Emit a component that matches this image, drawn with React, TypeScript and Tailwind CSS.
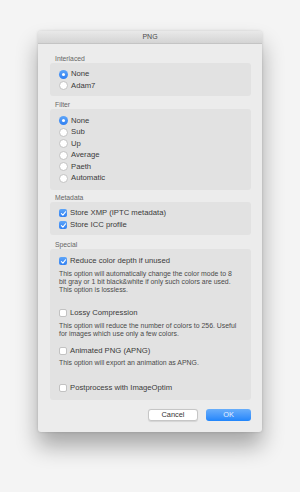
import React from 'react';

const font = { fontFamily: '"Liberation Sans", Arial, sans-serif' };

function Radio({ on, label }: { on?: boolean; label: string }) {
  return (
    <div className="flex h-[11.5px] items-center gap-[3px]">
      {on ? (
        <span className="flex h-[9px] w-[9px] items-center justify-center rounded-full bg-gradient-to-b from-[#5ea5f8] to-[#2f7ff2]">
          <span className="h-[3px] w-[3px] rounded-full bg-white" />
        </span>
      ) : (
        <span className="h-[9px] w-[9px] rounded-full border border-[#c2c2c2] bg-white" />
      )}
      <span className="text-[7.7px] leading-none text-[#3a3a3a]">{label}</span>
    </div>
  );
}

function Check({ on, label }: { on?: boolean; label: string }) {
  return (
    <div className="flex h-[12px] items-center gap-[3px]">
      {on ? (
        <span className="flex h-[8px] w-[8px] items-center justify-center rounded-[2px] bg-gradient-to-b from-[#5ea5f8] to-[#2f7ff2]">
          <svg viewBox="0 0 8 8" className="h-[7px] w-[7px]">
            <path d="M1.6 4.2 L3.3 5.9 L6.4 2" fill="none" stroke="white" strokeWidth="1.3" strokeLinecap="round" strokeLinejoin="round" />
          </svg>
        </span>
      ) : (
        <span className="h-[8px] w-[8px] rounded-[2px] border border-[#c2c2c2] bg-white" />
      )}
      <span className="text-[7.7px] leading-none text-[#3a3a3a]">{label}</span>
    </div>
  );
}

function Section({ title, children, className }: { title: string; children: React.ReactNode; className?: string }) {
  return (
    <div className={className}>
      <div className="h-[8px] pl-[5px] text-[6.8px] leading-[8px] text-[#666]">{title}</div>
      <div className="rounded-[3px] bg-[#e2e2e2] pl-[9px]">{children}</div>
    </div>
  );
}

function Desc({ children, className }: { children: React.ReactNode; className?: string }) {
  return <p className={`pr-[12px] text-[6.9px] leading-[8px] text-[#4a4a4a] ${className ?? ''}`}>{children}</p>;
}

export default function App() {
  return (
    <div className="flex h-[492px] w-[300px] justify-center bg-[#f4f4f4] pt-[31px]" style={font}>
      <div className="h-[401px] w-[224px] overflow-hidden rounded-[3px] bg-[#ececec] shadow-[0_14px_22px_rgba(0,0,0,0.32),0_0_3px_rgba(0,0,0,0.15)]">
        <div className="flex h-[13px] items-center justify-center border-b border-[#c4c4c4] bg-gradient-to-b from-[#e9e9e9] to-[#d4d4d4] text-[7px] text-[#4a4a4a]">
          PNG
        </div>
        <div className="pl-[12px] pr-[11px] pt-[11px]">
          <Section title="Interlaced">
            <div className="pb-[4.5px] pt-[5.5px]">
              <Radio on label="None" />
              <Radio label="Adam7" />
            </div>
          </Section>
          <Section title="Filter" className="mt-[5px]">
            <div className="pb-[6px] pt-[6px]">
              <Radio on label="None" />
              <Radio label="Sub" />
              <Radio label="Up" />
              <Radio label="Average" />
              <Radio label="Paeth" />
              <Radio label="Automatic" />
            </div>
          </Section>
          <Section title="Metadata" className="mt-[4px]">
            <div className="pb-[4px] pt-[5px]">
              <Check on label="Store XMP (IPTC metadata)" />
              <Check on label="Store ICC profile" />
            </div>
          </Section>
          <Section title="Special" className="mt-[6px]">
            <div className="pb-[6px] pt-[6px]">
              <Check on label="Reduce color depth if unused" />
              <Desc className="mt-[3px]">
                This option will automatically change the color mode to 8 bit gray or 1 bit black&amp;white if only such colors are used. This option is lossless.
              </Desc>
              <div className="mt-[13px]">
                <Check label="Lossy Compression" />
              </div>
              <Desc className="mt-[3px]">
                This option will reduce the number of colors to 256. Useful for images which use only a few colors.
              </Desc>
              <div className="mt-[7px]">
                <Check label="Animated PNG (APNG)" />
              </div>
              <Desc className="mt-[2px]">This option will export an animation as APNG.</Desc>
              <div className="mt-[15px]">
                <Check label="Postprocess with ImageOptim" />
              </div>
            </div>
          </Section>
          <div className="mt-[9px] flex justify-end gap-[8px]">
            <button className="h-[12px] w-[50px] rounded-[3px] border border-[#c6c6c6] bg-white text-[7.4px] leading-none text-[#333] shadow-[0_0.5px_1px_rgba(0,0,0,0.1)]">
              Cancel
            </button>
            <button className="h-[12px] w-[45px] rounded-[3px] bg-gradient-to-b from-[#69aefa] to-[#1f85fb] text-[7.4px] leading-none text-[#e6f1ff]">
              OK
            </button>
          </div>
        </div>
      </div>
    </div>
  );
}
